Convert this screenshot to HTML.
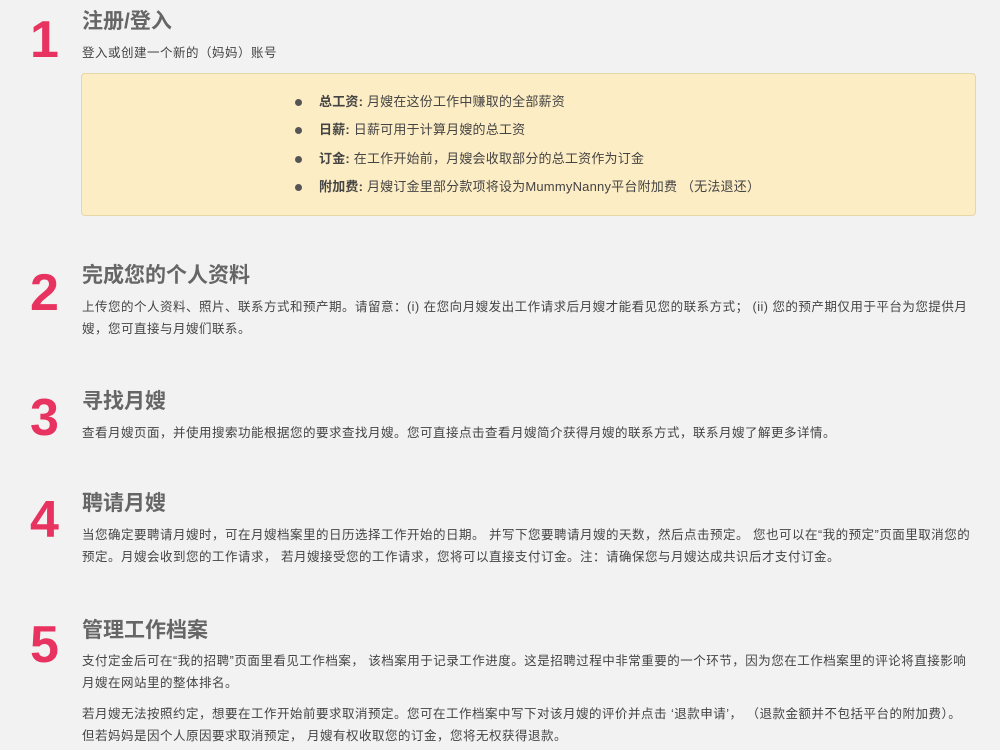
<!DOCTYPE html>
<html><head><meta charset="utf-8"><style>
body{margin:0;width:1000px;height:750px;background:#f2f2f2;font-family:"Liberation Sans","Noto Sans CJK SC",sans-serif;color:#444;position:relative;overflow:hidden}
.n{position:absolute;left:30px;font-size:52px;font-weight:bold;color:#e8325f;line-height:1}
.t{position:absolute;left:82px;font-size:21px;font-weight:bold;color:#666;line-height:1;white-space:nowrap}
.p{position:absolute;left:82px;width:900px;font-size:12.5px;line-height:22px;color:#444;margin:0;white-space:nowrap;letter-spacing:0.5px}
.box{position:absolute;left:81px;top:73px;width:893px;height:141px;background:#fdedc4;border:1px solid #e6d7a6;border-radius:4px}
.li{position:absolute;left:237px;font-size:13px;line-height:16px;white-space:nowrap;letter-spacing:0.2px}
.li:before{content:"";position:absolute;left:-24px;top:5px;width:7px;height:7px;border-radius:50%;background:#555}
.li b{color:#444}
</style></head><body>
<div class="n" style="top:14px">1</div>
<div class="t" style="top:11px">注册/登入</div>
<p class="p" style="top:42px">登入或创建一个新的（妈妈）账号</p>
<div class="box">
<div class="li" style="top:20px"><b>总工资:</b> 月嫂在这份工作中赚取的全部薪资</div>
<div class="li" style="top:48px"><b>日薪:</b> 日薪可用于计算月嫂的总工资</div>
<div class="li" style="top:77px"><b>订金:</b> 在工作开始前，月嫂会收取部分的总工资作为订金</div>
<div class="li" style="top:105px"><b>附加费:</b> 月嫂订金里部分款项将设为MummyNanny平台附加费 （无法退还）</div>
</div>

<div class="n" style="top:267px">2</div>
<div class="t" style="top:265px">完成您的个人资料</div>
<p class="p" style="top:296px">上传您的个人资料、照片、联系方式和预产期。请留意：(i) 在您向月嫂发出工作请求后月嫂才能看见您的联系方式； (ii) 您的预产期仅用于平台为您提供月<br>嫂，您可直接与月嫂们联系。</p>

<div class="n" style="top:392px">3</div>
<div class="t" style="top:391px">寻找月嫂</div>
<p class="p" style="top:422px">查看月嫂页面，并使用搜索功能根据您的要求查找月嫂。您可直接点击查看月嫂简介获得月嫂的联系方式，联系月嫂了解更多详情。</p>

<div class="n" style="top:494px">4</div>
<div class="t" style="top:493px">聘请月嫂</div>
<p class="p" style="top:524px">当您确定要聘请月嫂时，可在月嫂档案里的日历选择工作开始的日期。 并写下您要聘请月嫂的天数，然后点击预定。 您也可以在“我的预定”页面里取消您的<br>预定。月嫂会收到您的工作请求， 若月嫂接受您的工作请求，您将可以直接支付订金。注：请确保您与月嫂达成共识后才支付订金。</p>

<div class="n" style="top:619px">5</div>
<div class="t" style="top:620px">管理工作档案</div>
<p class="p" style="top:650px">支付定金后可在“我的招聘”页面里看见工作档案， 该档案用于记录工作进度。这是招聘过程中非常重要的一个环节，因为您在工作档案里的评论将直接影响<br>月嫂在网站里的整体排名。</p>
<p class="p" style="top:703px">若月嫂无法按照约定，想要在工作开始前要求取消预定。您可在工作档案中写下对该月嫂的评价并点击 ‘退款申请’， （退款金额并不包括平台的附加费）。<br>但若妈妈是因个人原因要求取消预定， 月嫂有权收取您的订金，您将无权获得退款。</p>
</body></html>
